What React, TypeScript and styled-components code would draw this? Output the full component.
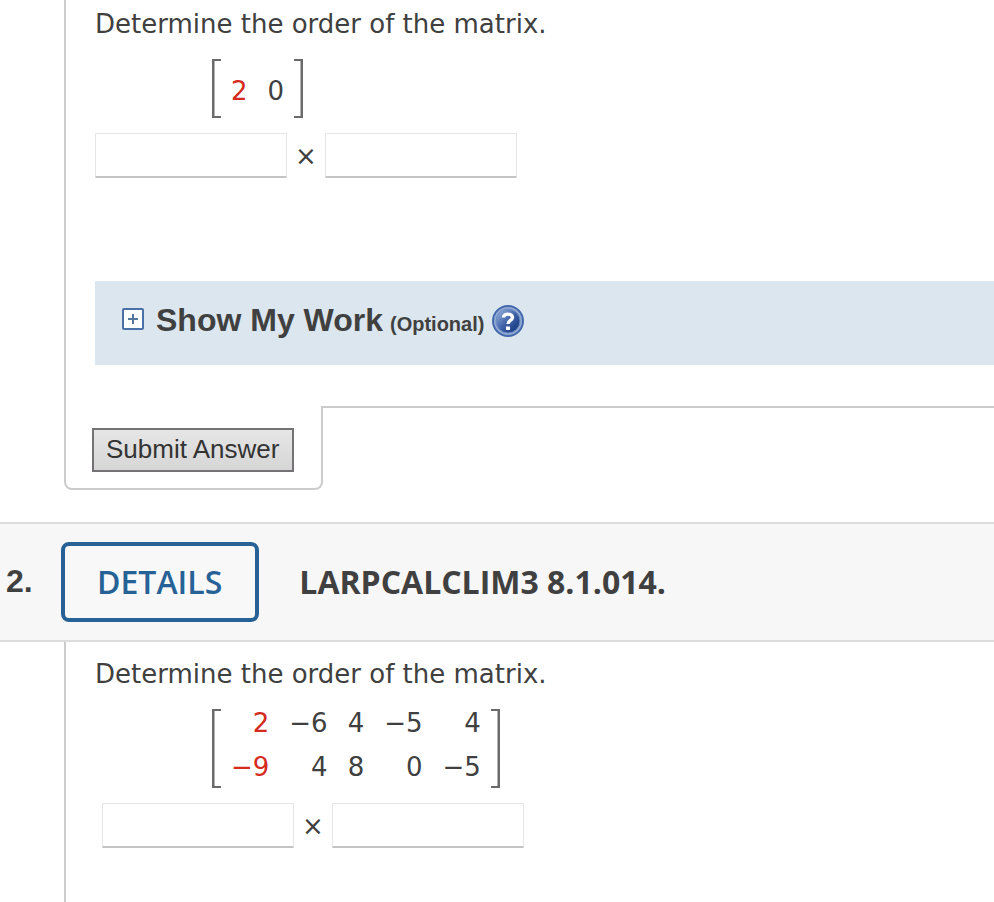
import React from "react";
import styled, { createGlobalStyle } from "styled-components";

const GlobalStyle = createGlobalStyle`
  * { box-sizing: border-box; }
  body {
    margin: 0;
    background: #fff;
    color: #404040;
    font-family: Verdana, "DejaVu Sans", sans-serif;
    font-size: 26px;
  }
`;

const line = "#cccccc";

const Page = styled.main`
  display: flex;
  flex-direction: column;
  min-height: 100vh;
`;

const QuestionBody = styled.section<{ $first?: boolean }>`
  flex: ${(p) => (p.$first ? "none" : "1")};
  margin-left: 64px;
  border-left: 2px solid ${line};
  padding: ${(p) => (p.$first ? "0 0 41px 29px" : "8px 0 40px 29px")};
`;

const Prompt = styled.p`
  margin: 0 0 11px;
  line-height: 48px;
`;

const MatrixRow = styled.div`
  display: flex;
  margin: 0 0 15px 117px;
`;

const Bracket = styled.span<{ $side: "left" | "right" }>`
  width: 9px;
  border: 2px solid #6a6a6a;
  border-${(p) => (p.$side === "left" ? "right" : "left")}: 0;
  box-shadow: inset ${(p) => (p.$side === "left" ? "1px" : "-1px")} 0 #b4b4b4;
`;

const Grid = styled.table<{ $single: boolean }>`
  border-collapse: collapse;
  margin: ${(p) => (p.$single ? "18px 10px 13px" : "0 10px 7px")};
`;

const Cell = styled.td<{ $red?: boolean }>`
  padding: 0 0 0 20px;
  text-align: right;
  line-height: 28px;
  color: ${(p) => (p.$red ? "#d42a20" : "inherit")};

  &:first-child { padding-left: 0; }
  tr + tr > & { padding-top: 16px; }
`;

const Answers = styled.div<{ $indented?: boolean }>`
  display: flex;
  align-items: center;
  gap: 8px;
  padding-left: ${(p) => (p.$indented ? "7px" : "0")};
`;

const AnswerInput = styled.input`
  width: 192px;
  height: 45px;
  padding: 0 8px;
  border: 1px solid #e6e6e6;
  border-bottom: 2px solid #c4c4c4;
  border-radius: 1px;
  background: #fff;
  font: inherit;
  color: inherit;
  outline: none;
`;

const ShowWork = styled.div`
  display: flex;
  align-items: flex-start;
  height: 84px;
  margin-top: 103px;
  padding: 20px 27px;
  background: #dce6ee;
  font-family: Arial, "Liberation Sans", sans-serif;
  font-weight: bold;
`;

const IconButton = styled.button<{ $top: number }>`
  display: flex;
  margin: ${(p) => p.$top}px 0 0;
  padding: 0;
  border: 0;
  background: none;
  cursor: pointer;
`;

const ShowWorkTitle = styled.h3`
  margin: 0 8px 0 12px;
  font-size: 32px;
  line-height: 38px;
`;

const Optional = styled.span`
  padding-left: 7px;
  font-size: 20px;
`;

const SubmitRow = styled.div`
  display: flex;
  margin-left: 64px;
`;

const SubmitTab = styled.div`
  height: 84px;
  padding: 22px 27px 0 26px;
  border: 2px solid ${line};
  border-top: 0;
  border-radius: 0 0 8px 8px;
`;

const TabRule = styled.div`
  flex: 1;
  margin-left: -2px;
  height: 2px;
  background: ${line};
`;

const SubmitButton = styled.button`
  height: 44px;
  padding: 0 13px 2px 12px;
  border: 2px solid #747274;
  border-radius: 0;
  background: linear-gradient(#e6e6e6, #d6d6d6);
  color: #333;
  font: 26px Arial, "Liberation Sans", sans-serif;
  cursor: pointer;
`;

const QuestionHeader = styled.header`
  display: flex;
  align-items: center;
  height: 120px;
  margin-top: 32px;
  padding-left: 6px;
  border: solid #dddddd;
  border-width: 2px 0;
  background: #f7f7f7;
  font-family: "Open Sans", sans-serif;
  font-size: 32px;
`;

const QuestionNumber = styled.span`
  width: 55px;
  padding-bottom: 2px;
  font-family: Arial, "Liberation Sans", sans-serif;
  font-weight: bold;
`;

const DetailsButton = styled.button`
  height: 80px;
  padding: 0 33px 2px 32px;
  border: 4px solid #276297;
  border-radius: 8px;
  background: #f8f8f8;
  color: #276297;
  font: 600 32px "Open Sans", sans-serif;
  cursor: pointer;
`;

const QuestionTitle = styled.h2`
  margin: 0 0 0 40px;
  padding-bottom: 2px;
  font-size: 32px;
  font-weight: 700;
`;

const PlusIcon = () => (
  <svg width="22" height="22" viewBox="0 0 22 22" aria-hidden="true">
    <rect x="1" y="1" width="20" height="20" rx="1" fill="#fff" stroke="#4a70a8" strokeWidth="2" />
    <path d="M11 6v10M6 11h10" stroke="#54779f" strokeWidth="2" />
  </svg>
);

const HelpIcon = () => (
  <svg width="32" height="32" viewBox="0 0 32 32" aria-hidden="true">
    <defs>
      <linearGradient id="help-fill" x1="0" y1="0" x2="1" y2="1">
        <stop offset="0.1" stopColor="#8ea9d8" />
        <stop offset="0.5" stopColor="#3f62a8" />
        <stop offset="0.9" stopColor="#16387e" />
      </linearGradient>
    </defs>
    <circle cx="16" cy="16" r="15" fill="#91aad3" stroke="#4468ad" strokeWidth="2" />
    <circle cx="16" cy="16" r="12" fill="url(#help-fill)" stroke="#6e8cc2" strokeWidth="1" />
    <path d="M11.5 12.5C11.5 8 20.5 8 20.5 12.5C20.5 15.5 16 15.5 16 19" fill="none" stroke="#fff" strokeWidth="3.4" />
    <rect x="14" y="21.5" width="4" height="3.5" fill="#fff" />
  </svg>
);

const Matrix = ({ rows }: { rows: string[][] }) => (
  <MatrixRow>
    <Bracket $side="left" />
    <Grid $single={rows.length === 1}>
      <tbody>
        {rows.map((row, r) => (
          <tr key={r}>
            {row.map((value, c) => (
              <Cell key={c} $red={c === 0}>{value}</Cell>
            ))}
          </tr>
        ))}
      </tbody>
    </Grid>
    <Bracket $side="right" />
  </MatrixRow>
);

const OrderAnswer = ({ indented }: { indented?: boolean }) => (
  <Answers $indented={indented}>
    <AnswerInput type="text" aria-label="Number of rows" />
    <span>×</span>
    <AnswerInput type="text" aria-label="Number of columns" />
  </Answers>
);

export default function App() {
  return (
    <>
      <GlobalStyle />
      <Page>
        <QuestionBody $first>
          <Prompt>Determine the order of the matrix.</Prompt>
          <Matrix rows={[["2", "0"]]} />
          <OrderAnswer />
          <ShowWork>
            <IconButton type="button" aria-label="Expand Show My Work" $top={7}>
              <PlusIcon />
            </IconButton>
            <ShowWorkTitle>
              Show My Work<Optional>(Optional)</Optional>
            </ShowWorkTitle>
            <IconButton type="button" aria-label="Help" $top={4}>
              <HelpIcon />
            </IconButton>
          </ShowWork>
        </QuestionBody>
        <SubmitRow>
          <SubmitTab>
            <SubmitButton type="button">Submit Answer</SubmitButton>
          </SubmitTab>
          <TabRule />
        </SubmitRow>
        <QuestionHeader>
          <QuestionNumber>2.</QuestionNumber>
          <DetailsButton type="button">DETAILS</DetailsButton>
          <QuestionTitle>LARPCALCLIM3 8.1.014.</QuestionTitle>
        </QuestionHeader>
        <QuestionBody>
          <Prompt>Determine the order of the matrix.</Prompt>
          <Matrix
            rows={[
              ["2", "−6", "4", "−5", "4"],
              ["−9", "4", "8", "0", "−5"],
            ]}
          />
          <OrderAnswer indented />
        </QuestionBody>
      </Page>
    </>
  );
}
